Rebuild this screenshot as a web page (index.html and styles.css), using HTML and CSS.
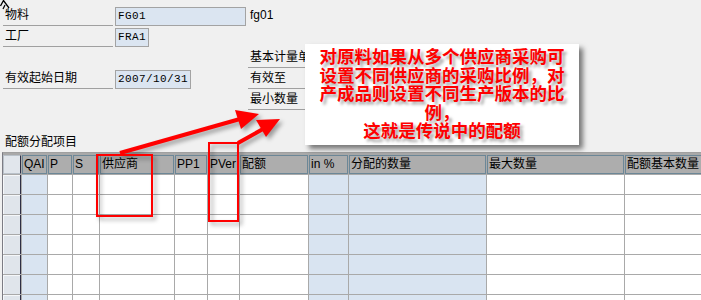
FILE: index.html
```html
<!DOCTYPE html>
<html lang="zh">
<head>
    <meta charset="UTF-8" />
    <title>配额分配</title>
    <link rel="stylesheet" href="styles.css">
</head>
<body>
    <svg class="cursor" width="12" height="10" viewBox="0 0 12 10">
        <polyline points="0.5,6 3.5,0.5 9,8" fill="none" stroke="#000" stroke-width="1.3" />
        <line x1="5" y1="5" x2="3" y2="9" stroke="#000" stroke-width="1.2" />
    </svg>

    <div class="head-form">
        <div class="label">物料</div>
        <div class="field"><span class="input wide">FG01</span></div>
        <div class="plain">fg01</div>

        <div class="label">工厂</div>
        <div class="field"><span class="input short">FRA1</span></div>
        <div></div>

        <div></div>
        <div></div>
        <div class="label">基本计量单</div>

        <div class="label">有效起始日期</div>
        <div class="field"><span class="input date">2007/10/31</span></div>
        <div class="label">有效至</div>

        <div></div>
        <div></div>
        <div class="label">最小数量</div>
    </div>

    <div class="section-title">配额分配项目</div>

    <div class="quota-table">
        <div class="corner"></div>
        <div class="th">QAI</div>
        <div class="th">P</div>
        <div class="th">S</div>
        <div class="th">供应商</div>
        <div class="th">PP1</div>
        <div class="th">PVer</div>
        <div class="th">配额</div>
        <div class="th">in %</div>
        <div class="th">分配的数量</div>
        <div class="th">最大数量</div>
        <div class="th">配额基本数量</div>
    </div>

    <div class="callout">
        对原料如果从多个供应商采购可<br>
        设置不同供应商的采购比例，对<br>
        产成品则设置不同生产版本的比<br>
        例，<br>
        这就是传说中的配额
    </div>

    <svg class="marks" width="701" height="300" viewBox="0 0 701 300">
        <g fill="none" stroke="#ff0000" stroke-width="2">
            <rect x="97" y="155" width="55" height="61" />
            <rect x="209" y="143" width="29" height="78" />
        </g>
        <g stroke="#ff0000" stroke-width="4" stroke-linecap="butt">
            <line x1="120" y1="153" x2="240" y2="119" />
            <line x1="238" y1="143" x2="263" y2="129" />
        </g>
        <g fill="#ff0000">
            <polygon points="259,114 235,110 241,129" />
            <polygon points="280,119 256,120 266,137" />
        </g>
    </svg>

    <script>
        // data rows of the quota table
        const table = document.querySelector('.quota-table');
        const kinds = ['sel', 'blue', '', '', '', '', '', '', 'blue', 'blue', '', ''];
        for (let r = 0; r < 7; r++) {
            kinds.forEach(kind => {
                const cell = document.createElement('div');
                cell.className = 'td' + (kind ? ' ' + kind : '');
                table.appendChild(cell);
            });
        }
    </script>
</body>
</html>
```

FILE: styles.css
```css
html, body {
    overflow: hidden;
}

body {
    margin: 0;
    background: #f0f0f0;
    font-family: "Liberation Sans", "Noto Sans CJK SC", sans-serif;
    font-size: 12px;
    color: #000;
    position: relative;
    width: 701px;
    height: 300px;
}

.cursor {
    position: absolute;
    left: 0;
    top: 0;
}

.head-form {
    display: grid;
    grid-template-columns: 110px 135px 90px;
    grid-template-rows: repeat(5, 21px);
    margin: 5px 0 0 3px;
}

.label {
    border-bottom: 1px solid #a0a0a0;
    line-height: 20px;
    padding-left: 2px;
    white-space: nowrap;
    overflow: hidden;
}

.plain {
    line-height: 20px;
    padding-left: 2px;
}

.field {
    display: flex;
    align-items: flex-end;
    padding-left: 2px;
}

.input {
    display: block;
    box-sizing: border-box;
    height: 19px;
    border: 1px solid #a3a3a3;
    background: #dbe5f1;
    font-family: "Liberation Mono", monospace;
    font-size: 11px;
    letter-spacing: 0.4px;
    line-height: 17px;
    padding-left: 2px;
}

.input.wide { width: 131px; }
.input.short { width: 34px; }
.input.date { width: 76px; }

.section-title {
    margin: 24px 0 2px 5px;
    line-height: 16px;
}

.quota-table {
    display: grid;
    grid-template-columns: 18px 25px 24px 26px 74px 32px 31px 68px 39px 137px 137px 120px;
    grid-template-rows: 21px;
    grid-auto-rows: 19px;
    gap: 1px;
    width: max-content;
    margin-left: 2px;
    background: #a9a9a9;
    border-left: 1px solid #7c7c84;
    border-top: 1px solid #a0a0a0;
}

.corner {
    box-sizing: border-box;
    margin-top: 2px;
    background: #e1e6ec;
    border: 1px solid #b9c1c9;
    border-right: 1px solid #2e2e44;
}

.th {
    box-sizing: border-box;
    margin-top: 2px;
    background: #adadad;
    border: 1px solid #6c8797;
    line-height: 17px;
    padding-left: 1px;
    white-space: nowrap;
    overflow: hidden;
}

.td {
    background: #fff;
}

.td.blue {
    background: #d9e4f1;
}

.td.sel {
    box-sizing: border-box;
    background: #e0e5eb;
    border-right: 1px solid #2e2e44;
    box-shadow: inset 1px 1px 0 #f5f7f9;
}

.callout {
    position: absolute;
    left: 305px;
    top: 44px;
    width: 274px;
    height: 101px;
    box-sizing: border-box;
    padding-top: 3px;
    background: #fff;
    box-shadow: 4px 4px 5px rgba(0, 0, 0, 0.5);
    color: #ff0000;
    font-family: "Noto Sans CJK SC", sans-serif;
    font-weight: bold;
    font-size: 17.5px;
    line-height: 18.5px;
    text-align: center;
    text-shadow: 3px 3px 3px rgba(0, 0, 0, 0.35);
    white-space: nowrap;
    z-index: 2;
}

.marks {
    position: absolute;
    left: 0;
    top: 0;
    pointer-events: none;
    filter: drop-shadow(3px 3px 2px rgba(0, 0, 0, 0.35));
    z-index: 3;
}
```
